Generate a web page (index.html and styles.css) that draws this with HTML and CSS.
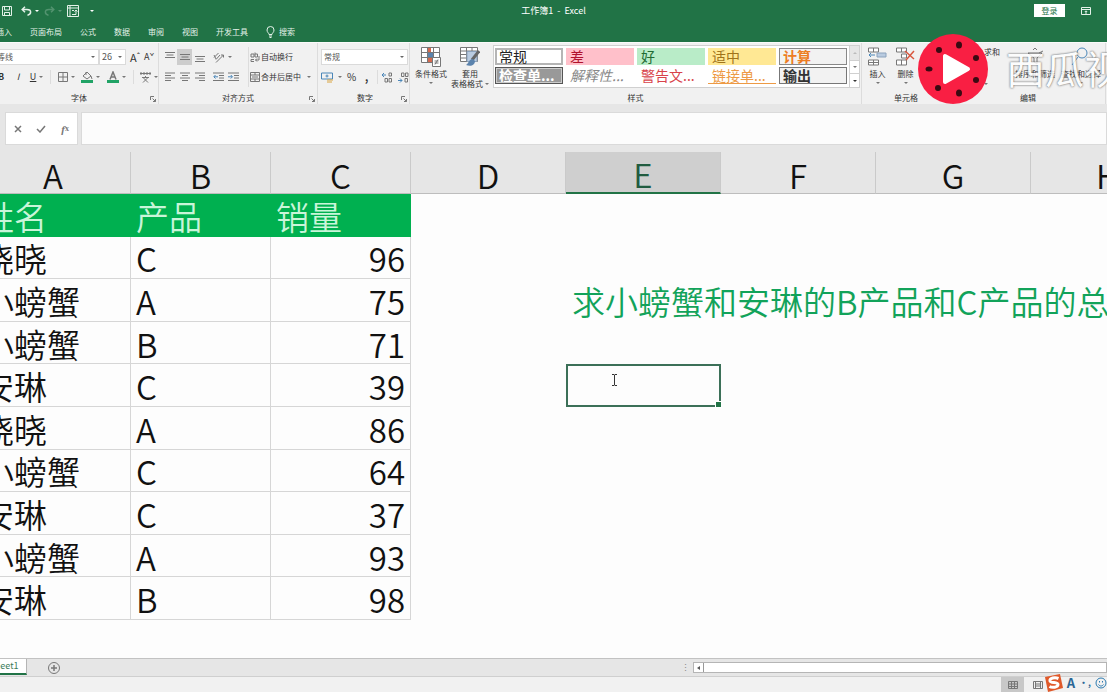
FILE: index.html
```html
<!DOCTYPE html>
<html lang="zh-CN">
<head>
  <meta charset="UTF-8">
  <meta name="viewport" content="width=device-width, initial-scale=1.0">
  <title>工作簿1 - Excel</title>
  <link rel="stylesheet" href="styles.css">
</head>
<body>
  <div class="app">
    <!-- Title bar -->
    <header class="titlebar">
      <div class="quick-access">
        <button class="save" aria-label="保存"><svg width="10" height="10" viewBox="0 0 10 10"><path d="M.5 .5h9v9h-9zM2.500 .5v3.500h5V.5M2.500 9.500V6.500h5v3"/></svg></button>
        <button aria-label="撤消"><svg width="11" height="10" viewBox="0 0 11 10"><path class="thick" d="M4 .8 1.200 3.500 4 6.200M1.500 3.500H6c5 0 4.500 5 .5 5.800"/></svg><i class="caret"></i></button>
        <button class="redo" aria-label="恢复"><svg width="11" height="10" viewBox="0 0 11 10"><path class="thick" d="M7 .8 9.800 3.500 7 6.200M9.500 3.500H5C0 3.500 .5 8.500 4.500 9.300"/></svg><i class="caret"></i></button>
        <button aria-label="数据透视表"><svg width="12" height="12" viewBox="0 0 12 12"><path d="M.5 .5h11v11H.5zM.5 3h11M3 .5v11M5 9.500h4V5M5 5.500h2M7.500 6.500 9 5l1.500 1.500"/></svg></button>
        <button class="customize" aria-label="自定义"><i class="caret"></i></button>
      </div>
      <h1>工作簿1&nbsp; -&nbsp; Excel</h1>
      <div class="account">
        <button class="login">登录</button>
        <button aria-label="功能区显示选项"><svg width="10" height="8" viewBox="0 0 10 8"><path d="M.5 .5h9v7h-9zM.5 2.500h9M5 7V4M3.800 5 5 3.800 6.200 5"/></svg></button>
      </div>
    </header>

    <nav class="tabs">
      <a href="#">插入</a>
      <a href="#">页面布局</a>
      <a href="#">公式</a>
      <a href="#">数据</a>
      <a href="#">审阅</a>
      <a href="#">视图</a>
      <a href="#">开发工具</a>
      <a href="#" class="search"><svg width="9" height="12" viewBox="0 0 9 12"><path d="M3 8.500C3 7 1 6.500 1 4a3.500 3.500 0 0 1 7 0c0 2.500-2 3-2 4.500zM3 10h3M3.500 11.500h2"/></svg>搜索</a>
    </nav>

    <!-- Ribbon -->
    <div class="ribbon">
      <section class="group font-group">
        <div class="row">
          <select class="font-name" aria-label="字体"><option>等线</option></select>
          <select class="font-size" aria-label="字号"><option>26</option></select>
          <button class="tool grow" aria-label="增大字号">A<sup>ˆ</sup></button>
          <button class="tool shrink" aria-label="减小字号">A<sup>ˇ</sup></button>
        </div>
        <div class="row second">
          <button class="tool"><b>B</b></button>
          <button class="tool"><em>I</em></button>
          <button class="tool drop"><u>U</u><i class="caret"></i></button>
          <span class="divider"></span>
          <button class="tool drop" aria-label="边框"><svg width="10" height="10" viewBox="0 0 10 10"><path d="M.5 .5h9v9h-9zM5 .5v9M.5 5h9"/></svg><i class="caret"></i></button>
          <button class="tool drop" aria-label="填充颜色"><svg width="12" height="12" viewBox="0 0 12 12"><path d="M2 5 6 1l4 4-4 3zM5 1v3M10 5l1 3"/><path class="green-fill" d="M0 9h12v3H0z"/></svg><i class="caret"></i></button>
          <button class="tool drop" aria-label="字体颜色"><svg width="12" height="12" viewBox="0 0 12 12"><path class="thick" d="M3 8.500 6 1l3 7.500M4 6h4"/><path class="green-fill" d="M0 9h12v3H0z"/></svg><i class="caret"></i></button>
          <span class="divider"></span>
          <button class="tool drop" aria-label="拼音"><svg width="11" height="12" viewBox="0 0 11 12"><path d="M0 2.500h11M1 1v3M4 1v3M7 1v3M10 1v3M2 6.500h7M5.500 5v1.500M3.500 7 8 11.500M7.500 7 3 11.500"/></svg><i class="caret"></i></button>
        </div>
        <footer>字体<svg class="launcher" viewBox="0 0 6 6"><path d="M.5 4V.5H4M2.500 2.500l3 3M5.500 3v2.500H3"/></svg></footer>
      </section>

      <section class="group align-group">
        <div class="align-body">
          <div class="align-grid">
            <button class="tool" aria-label="顶端对齐"><svg width="10" height="10" viewBox="0 0 10 10"><path d="M0 .5h10M1.500 3h7M0 5.500h10"/></svg></button>
            <button class="tool active" aria-label="垂直居中"><svg width="10" height="10" viewBox="0 0 10 10"><path d="M0 2.500h10M1.500 5h7M0 7.500h10"/></svg></button>
            <button class="tool" aria-label="底端对齐"><svg width="10" height="10" viewBox="0 0 10 10"><path d="M0 4.500h10M1.500 7h7M0 9.500h10"/></svg></button>
            <button class="tool" aria-label="左对齐"><svg width="10" height="10" viewBox="0 0 10 10"><path d="M0 1h10M0 3.500h6M0 6h10M0 8.500h6"/></svg></button>
            <button class="tool" aria-label="居中"><svg width="10" height="10" viewBox="0 0 10 10"><path d="M0 1h10M2 3.500h6M0 6h10M2 8.500h6"/></svg></button>
            <button class="tool" aria-label="右对齐"><svg width="10" height="10" viewBox="0 0 10 10"><path d="M0 1h10M4 3.500h6M0 6h10M4 8.500h6"/></svg></button>
          </div>
          <div class="stack indent">
            <button class="tool drop" aria-label="方向"><svg width="11" height="11" viewBox="0 0 11 11"><path d="M1 5.500 5.500 1M3 7.500 7 3M3 10.500l7.500-7.500M8 3h2.500v2.500M1 3l2 4"/></svg><i class="caret"></i></button>
            <div class="pair">
              <button class="tool" aria-label="减少缩进"><svg width="11" height="10" viewBox="0 0 11 10"><path d="M0 1h11M6 3.500h5M6 6h5M0 8.500h11"/><path class="blue" d="M5 4.800H1M2.500 3 .8 4.800l1.700 1.700"/></svg></button>
              <button class="tool" aria-label="增加缩进"><svg width="11" height="10" viewBox="0 0 11 10"><path d="M0 1h11M6 3.500h5M6 6h5M0 8.500h11"/><path class="blue" d="M0 4.800h4M2.800 3l1.700 1.800-1.700 1.700"/></svg></button>
            </div>
          </div>
          <div class="stack wrap">
            <button class="tool labelled"><svg width="10" height="10" viewBox="0 0 10 10"><path d="M1 2h3v3H1zM5 .5V5h2.500V2H5M4 7.500H1v2h3M5.500 8H9V4M7 6.500 5.500 8 7 9.500"/></svg>自动换行</button>
            <button class="tool labelled"><svg width="10" height="10" viewBox="0 0 10 10"><path d="M.5 .5h9v9h-9zM.5 3h9M.5 7h9M5 .5V3M5 7v2.500M2 5h6"/></svg>合并后居中<i class="caret"></i></button>
          </div>
        </div>
        <footer>对齐方式<svg class="launcher" viewBox="0 0 6 6"><path d="M.5 4V.5H4M2.500 2.500l3 3M5.500 3v2.500H3"/></svg></footer>
      </section>

      <section class="group number-group">
        <div class="row"><select class="number-format" aria-label="数字格式"><option>常规</option></select></div>
        <div class="row second">
          <button class="tool drop" aria-label="会计数字格式"><svg width="13" height="11" viewBox="0 0 13 11"><path class="blue" d="M.5 1h11v6H.5zM4.500 4h3M6 2.500v3"/><path class="gold" d="M6 8h6M6 10h5"/></svg><i class="caret"></i></button>
          <button class="tool percent">%</button>
          <button class="tool comma">,</button>
          <span class="divider"></span>
          <button class="tool" aria-label="增加小数位数"><svg width="11" height="11" viewBox="0 0 11 11"><path class="blue" d="M0 3h4M2 1 0 3l2 2"/><path d="M7 1h2.500v3H7zM3 6.500h2.500v3.500H3zM7 6.500h2.500v3.500H7z"/></svg></button>
          <button class="tool" aria-label="减少小数位数"><svg width="11" height="11" viewBox="0 0 11 11"><path class="blue" d="M0 8.500h4M2 6.500l2 2-2 2"/><path d="M3.500 1H6v3.500H3.500zM7.500 1H10v3.500H7.500zM7 6.500h2.500v3.500H7z"/></svg></button>
        </div>
        <footer>数字<svg class="launcher" viewBox="0 0 6 6"><path d="M.5 4V.5H4M2.500 2.500l3 3M5.500 3v2.500H3"/></svg></footer>
      </section>

      <section class="group styles-group">
        <div class="styles-body">
          <button class="big"><svg width="20" height="20" viewBox="0 0 20 20"><path class="sheet" d="M.5 .5h18v15H.5zM.5 5.500h18M.5 10.500h18M6.500 .5v15M12.500 .5v15"/><path class="red-fill" d="M7 1h3v4H7zM7 11h4v4H7z"/><path class="blue-fill" d="M7 6h5v4H7z"/><path class="sheet" d="M11.500 10.500h8v9h-8zM13.500 14h4M13.500 16h4M17 12.500l-3 5"/></svg><span>条件格式</span><i class="caret"></i></button>
          <button class="big"><svg width="20" height="20" viewBox="0 0 20 20"><path class="sheet" d="M.5 .5h17v14H.5zM.5 4h17M.5 7.500h17M.5 11h17M6.500 .5v14M12 .5v14"/><path class="blue-pale" d="M7 4.500h10v10H7z"/><path class="brush" d="M19 4l-7 9"/><path class="blue-fill" d="M13 12c-4 0-4 4-7 6 5 2 9 0 9-4z"/></svg><span>套用</span><span class="last-line">表格格式<i class="caret"></i></span></button>
          <div class="gallery">
            <div class="swatches">
              <button class="swatch normal">常规</button>
              <button class="swatch bad">差</button>
              <button class="swatch good">好</button>
              <button class="swatch neutral">适中</button>
              <button class="swatch calc">计算</button>
              <button class="swatch check">检查单...</button>
              <button class="swatch explain">解释性...</button>
              <button class="swatch warn">警告文...</button>
              <button class="swatch link">链接单...</button>
              <button class="swatch output">输出</button>
            </div>
            <div class="scroller">
              <button class="off" aria-label="上一行"><i class="caret up"></i></button>
              <button aria-label="下一行"><i class="caret"></i></button>
              <button aria-label="其他"><i class="caret more"></i></button>
            </div>
          </div>
        </div>
        <footer>样式</footer>
      </section>

      <section class="group cells-group">
        <div class="big-row">
          <button class="big"><svg width="19" height="20" viewBox="0 0 19 20"><path class="sheet" d="M.5 1h10v4H.5zM5.500 1v4M.5 13h10v5H.5zM5.500 13v5M.5 15.500h10"/><path class="blue-pale" d="M9 6h9v4H9z"/><path class="blue" d="M1 8h6M3 6 1 8l2 2"/></svg><span>插入</span><i class="caret"></i></button>
          <button class="big"><svg width="19" height="20" viewBox="0 0 19 20"><path class="sheet" d="M.5 1h10v4H.5zM5.500 1v4M5.500 7h5v4h-5zM.5 13h10v5H.5zM5.500 13v5"/><path class="red" d="M9 4l9 8M18 4l-8 9"/></svg><span>删除</span><i class="caret"></i></button>
        </div>
        <footer>单元格</footer>
      </section>

      <section class="group edit-group">
        <div class="edit-body">
          <div class="sums">
            <button>求和</button>
            <button aria-label="填充"><i class="caret"></i></button>
            <button aria-label="清除"><i class="caret"></i></button>
          </div>
          <button class="big"><svg width="20" height="20" viewBox="0 0 20 20"><path d="M8 3l2-2 2 2M3 6h14l-5 5v6l-3-2v-4zM14 6l4-2"/></svg><span>排序和筛选</span><i class="caret"></i></button>
          <button class="big"><svg width="20" height="20" viewBox="0 0 20 20"><path class="blue" d="M6 6a5 5 0 1 0 10 0a5 5 0 1 0-10 0M7 10l-6 8"/></svg><span>查找和选择</span><i class="caret"></i></button>
        </div>
        <footer>编辑</footer>
      </section>
    </div>

    <!-- Formula bar -->
    <div class="formula-bar">
      <div class="formula-buttons">
        <button aria-label="取消"><svg width="8" height="8" viewBox="0 0 8 8"><path class="thick" d="M1 1l6 6M7 1 1 7"/></svg></button>
        <button aria-label="输入"><svg width="10" height="8" viewBox="0 0 10 8"><path class="thick" d="M1 4l3 3 5-6"/></svg></button>
        <button class="fx"><em>f</em><small>x</small></button>
      </div>
      <input type="text" aria-label="编辑栏">
    </div>

    <!-- Worksheet -->
    <main class="sheet-area">
      <table class="grid">
        <colgroup>
          <col class="first"><col><col><col class="wide"><col class="wide"><col class="wide"><col class="wide"><col class="wide">
        </colgroup>
        <thead>
          <tr><th>A</th><th>B</th><th>C</th><th>D</th><th class="current">E</th><th>F</th><th>G</th><th>H</th></tr>
        </thead>
        <tbody>
          <tr class="heading"><td>姓名</td><td>产品</td><td>销量</td><td colspan="5"></td></tr>
          <tr><td>晓晓</td><td>C</td><td>96</td><td colspan="5"></td></tr>
          <tr><td>小螃蟹</td><td>A</td><td>75</td><td></td><td class="question" colspan="4">求小螃蟹和安琳的B产品和C产品的总销量</td></tr>
          <tr><td>小螃蟹</td><td>B</td><td>71</td><td colspan="5"></td></tr>
          <tr><td>安琳</td><td>C</td><td>39</td><td></td><td class="selected"><svg width="7" height="12" viewBox="0 0 7 12"><path d="M1 .5h2l.5 .5L4 .5h2M3.500 1v10M1 11.500h2l.5-.5 .5 .5h2"/></svg></td><td colspan="3"></td></tr>
          <tr><td>晓晓</td><td>A</td><td>86</td><td colspan="5"></td></tr>
          <tr><td>小螃蟹</td><td>C</td><td>64</td><td colspan="5"></td></tr>
          <tr><td>安琳</td><td>C</td><td>37</td><td colspan="5"></td></tr>
          <tr><td>小螃蟹</td><td>A</td><td>93</td><td colspan="5"></td></tr>
          <tr><td>安琳</td><td>B</td><td>98</td><td colspan="5"></td></tr>
        </tbody>
      </table>
    </main>

    <div class="sheet-tabs">
      <a href="#" class="sheet-tab">Sheet1</a>
      <button class="add-sheet" aria-label="新工作表"><svg width="12" height="12" viewBox="0 0 12 12"><path d="M.5 6a5.500 5.500 0 1 0 11 0a5.500 5.500 0 1 0-11 0"/><path class="thick" d="M6 3v6M3 6h6"/></svg></button>
      <div class="scroll-side">
        <span class="grip">⋮</span>
        <div class="hscroll"><button aria-label="向左滚动"><i class="caret left"></i></button></div>
      </div>
    </div>

    <footer class="statusbar">
      <button class="view on" aria-label="普通"><svg width="10" height="8" viewBox="0 0 10 8"><path d="M.5 .5h9v7h-9zM.5 3h9M.5 5.500h9M3.500 .5v7M6.500 .5v7"/></svg></button>
      <button class="view" aria-label="页面布局"><svg width="10" height="8" viewBox="0 0 10 8"><path d="M.5 .5h9v7h-9zM2.500 .5v7M7.500 .5v7M3 3h4M3 5h4"/></svg></button>
    </footer>

    <!-- Input method toolbar floating over the status bar -->
    <div class="ime">
      <svg width="19" height="18" viewBox="0 0 19 18"><path class="ime-box" d="M1 3 16 0l3 14-15 4z"/><path class="ime-s" d="M14.500 4.500C11 3 5.500 4 6 7c.5 2.500 8 .5 8 3.500 0 3-6 3.500-8.500 2"/></svg>
      <span class="ime-a">A</span>
      <span class="ime-dot">•,</span>
      <svg width="12" height="12" viewBox="0 0 12 12"><path class="ime-face" d="M1 6a5 5 0 1 0 10 0a5 5 0 1 0-10 0M4.500 4v1.500M7.500 4v1.500M3.500 7.500c1.500 2 3.500 2 5 0"/></svg>
    </div>

    <!-- Video watermark -->
    <div class="watermark">
      <svg width="70" height="70" viewBox="0 0 70 70">
        <circle class="melon" cx="35" cy="35" r="35"/>
        <g class="seeds">
          <ellipse cx="41" cy="11" rx="3" ry="3.500"/>
          <ellipse cx="21" cy="16" rx="3" ry="3"/>
          <ellipse cx="58" cy="24" rx="3" ry="3"/>
          <ellipse cx="11" cy="35" rx="3.500" ry="2.500"/>
          <ellipse cx="58" cy="46" rx="3" ry="3"/>
          <ellipse cx="20" cy="54" rx="3" ry="3"/>
          <ellipse cx="41" cy="59" rx="3" ry="3.500"/>
        </g>
        <path class="play" d="M27 22v26l23-13z"/>
      </svg>
      <span>西瓜视频</span>
    </div>
  </div>
</body>
</html>
```
FILE: styles.css
```css
* {
  box-sizing: border-box;
}

body {
  margin: 0;
  overflow: hidden;
  font-family: "Noto Sans CJK SC", "Noto Sans", sans-serif;
  font-size: 8px;
  line-height: 10px;
  color: #333;
}

button,
select,
input {
  font: inherit;
  color: inherit;
  padding: 0;
  margin: 0;
  border: none;
  background: none;
  border-radius: 0;
}

button {
  display: flex;
  align-items: center;
  justify-content: center;
  white-space: nowrap;
}

a {
  color: inherit;
  text-decoration: none;
}

svg {
  display: block;
  flex: none;
  fill: none;
  stroke: #777;
}

.app {
  position: relative;
  display: flex;
  flex-direction: column;
  height: 100vh;
  overflow: hidden;
  background: #e6e6e6;
}

.caret {
  border: 2px solid transparent;
  border-top-color: #777;
  border-bottom: none;
}

.caret.left {
  border: 2px solid transparent;
  border-right: 3px solid #555;
  border-left: none;
}

.caret.up {
  border: 2px solid transparent;
  border-bottom-color: #bbb;
  border-top: none;
}

.thick {
  stroke-width: 1.5;
}

.blue {
  stroke: #4a86b8;
}

.gold {
  stroke: #d9a441;
}

.red {
  stroke: #d9573f;
  stroke-width: 1.5;
}

.green-fill {
  fill: #21a366;
  stroke: none;
}

.red-fill {
  fill: #d4694e;
  stroke: none;
}

.blue-fill {
  fill: #5b83ad;
  stroke: none;
}

.blue-pale {
  fill: #b9cbe0;
  stroke: #8ca3bd;
}

.sheet {
  fill: #fff;
}

.brush {
  stroke: #666;
  stroke-width: 3;
}

/* Title bar */
.titlebar {
  display: grid;
  grid-template-columns: 1fr auto 1fr;
  align-items: center;
  flex: none;
  height: 21px;
  background: #217346;
  color: #fff;
}

.titlebar svg,
.tabs svg {
  stroke: #e4f2e9;
}

.titlebar .caret {
  border-top-color: #fff;
}

.titlebar h1 {
  margin: 0;
  font-size: 9px;
  line-height: 18px;
  font-weight: 400;
}

.quick-access {
  display: flex;
  align-items: center;
  gap: 5px;
  padding-left: 2px;
}

.quick-access button {
  gap: 3px;
}

.quick-access .save {
  margin-right: 4px;
}

.quick-access .redo {
  opacity: 0.25;
}

.quick-access .customize {
  margin-left: 6px;
}

.account {
  display: flex;
  align-items: center;
  justify-content: flex-end;
  gap: 16px;
  padding-right: 16px;
}

.login {
  width: 31px;
  height: 13px;
  background: #fff;
  color: #217346;
}

/* Ribbon tabs */
.tabs {
  display: flex;
  align-items: center;
  gap: 18px;
  flex: none;
  height: 21px;
  background: #217346;
  color: #e4f2e9;
}

.tabs a {
  flex: none;
}

.tabs a:first-child {
  margin-left: -4px;
}

.tabs .search {
  display: flex;
  align-items: center;
  gap: 4px;
}

/* Ribbon */
.ribbon {
  display: flex;
  flex: none;
  height: 62px;
  background: #f1f1f1;
  border-top: 1px solid #fafafa;
}

.group {
  display: flex;
  flex-direction: column;
  flex: none;
  padding-top: 4px;
  border-right: 1px solid #dcdcdc;
}

.group footer {
  position: relative;
  margin-top: auto;
  padding-bottom: 1px;
  text-align: center;
}

.launcher {
  position: absolute;
  right: 2px;
  bottom: 2px;
  width: 6px;
  height: 6px;
}

.row {
  display: flex;
  align-items: center;
  height: 20px;
}

.tool {
  min-width: 10px;
  height: 16px;
}

.drop {
  gap: 4px;
}

.divider {
  width: 1px;
  height: 14px;
  background: #dcdcdc;
}

select {
  appearance: none;
  height: 16px;
  padding-left: 2px;
  border: 1px solid #dadada;
  background: #fff url("data:image/svg+xml,%3Csvg xmlns='http://www.w3.org/2000/svg' width='4' height='2'%3E%3Cpath d='M0 0h4L2 2z' fill='%23666'/%3E%3C/svg%3E") no-repeat right 3px center;
  color: #555;
}

.font-group {
  width: 159px;
}

.font-name {
  width: 105px;
  margin-left: -6px;
}

.font-size {
  width: 27px;
  font-size: 9px;
}

.grow,
.shrink {
  margin-left: 4px;
  font-size: 11px;
}

.shrink {
  font-size: 9px;
}

.tool sup {
  font-size: 8px;
  line-height: 8px;
}

.font-group .second {
  gap: 7px;
  margin-left: -4px;
}

.font-group .second .tool {
  gap: 3px;
}

.font-group .second .tool:nth-child(-n+3) {
  font-size: 9px;
}

.align-group {
  width: 159px;
}

.align-body {
  display: flex;
  padding-left: 3px;
}

.align-grid {
  display: grid;
  grid-template-columns: repeat(3, 15px);
  grid-auto-rows: 20px;
  align-items: center;
}

.tool.active {
  background: #cdcdcd;
}

.stack {
  display: flex;
  flex-direction: column;
  align-items: flex-start;
  gap: 4px;
  padding-top: 2px;
}

.indent {
  width: 36px;
  margin-left: 6px;
  border-right: 1px solid #dcdcdc;
}

.pair {
  display: flex;
  gap: 4px;
}

.wrap {
  padding-left: 1px;
}

.labelled {
  gap: 1px;
}

.labelled .caret {
  margin-left: 5px;
}

.number-group {
  width: 92px;
  padding-left: 3px;
}

.number-format {
  width: 87px;
}

.number-group .second {
  gap: 5px;
}

.percent,
.comma {
  font-size: 10px;
}

.comma {
  font-weight: 700;
}

.big {
  display: flex;
  flex-direction: column;
  justify-content: flex-start;
}

.big svg {
  margin-bottom: 2px;
}

.big > .caret {
  margin-top: 3px;
}

.last-line {
  display: flex;
  align-items: center;
  gap: 2px;
}

.styles-group {
  width: 452px;
}

.styles-body {
  display: flex;
  gap: 4px;
  padding-left: 5px;
}

.gallery {
  display: flex;
  height: 43px;
  margin-top: -2px;
  border: 1px solid #d0d0d0;
  background: #fff;
}

.swatches {
  display: grid;
  grid-template-columns: repeat(5, 68px);
  grid-auto-rows: 17px;
  gap: 2px 3px;
  padding: 2px 0 2px 1px;
}

.swatch {
  justify-content: flex-start;
  padding-left: 4px;
  font-size: 14px;
  line-height: 15px;
}

.normal {
  border: 2px solid #b5b5b5;
  padding-left: 2px;
  color: #222;
}

.bad {
  background: #ffc0ca;
  color: #b0122c;
}

.good {
  background: #b9ecc8;
  color: #226b32;
}

.neutral {
  background: #ffe894;
  color: #a0731b;
}

.calc {
  border: 1px solid #888;
  padding-left: 3px;
  background: #f2f2f2;
  color: #ed7d24;
  font-weight: 700;
}

.check {
  border: 2px solid #555;
  outline: 1px solid #ccc;
  outline-offset: -2px;
  padding-left: 2px;
  background: #999;
  color: #fff;
  font-weight: 700;
}

.explain {
  color: #888;
  font-style: italic;
}

.warn {
  color: #d8434b;
}

.link {
  border-bottom: 1px solid #ed9a45;
  color: #ed9a45;
}

.output {
  border: 1px solid #777;
  padding-left: 3px;
  background: #f2f2f2;
  color: #333;
  font-weight: 700;
}

.scroller {
  display: grid;
  grid-template-rows: repeat(3, 1fr);
  width: 10px;
  margin-left: 2px;
  border-left: 1px solid #d0d0d0;
}

.scroller button + button {
  border-top: 1px solid #d0d0d0;
}

.scroller .off {
  background: #e6e6e6;
}

.scroller .more {
  border-top-color: #333;
}

.cells-group {
  width: 89px;
}

.big-row {
  display: flex;
  gap: 9px;
  padding-left: 6px;
}

.edit-group {
  width: 155px;
}

.edit-body {
  display: flex;
  gap: 6px;
  padding-left: 33px;
}

.sums {
  display: flex;
  flex-direction: column;
  align-items: flex-start;
  gap: 12px;
  margin-right: 9px;
}

/* Formula bar */
.formula-bar {
  display: flex;
  gap: 3px;
  flex: none;
  height: 48px;
  padding: 8px 0 7px 5px;
}

.formula-buttons {
  display: grid;
  grid-template-columns: repeat(3, 1fr);
  width: 73px;
  border: 1px solid #dadada;
  background: #fff;
}

.formula-buttons .fx {
  font-family: "Liberation Serif", serif;
  font-size: 11px;
  font-weight: 700;
  color: #777;
}

.fx small {
  font-size: 8px;
}

.formula-bar input {
  flex: 1;
  border: 1px solid #dadada;
  background: #fcfcfc;
}

/* Worksheet */
.sheet-area {
  flex: 1;
  min-height: 0;
  overflow: hidden;
  background: #fdfdfd;
}

.grid {
  width: 1210px;
  height: 468px;
  margin-left: -24px;
  table-layout: fixed;
  border-collapse: separate;
  border-spacing: 0;
  font-size: 33px;
  font-weight: 350;
  line-height: 34px;
  color: #111;
}

.grid col {
  width: 140px;
}

.grid .first {
  width: 155px;
}

.grid .wide {
  width: 155px;
}

.grid th {
  height: 42px;
  padding: 4px 0 0;
  border-right: 1px solid #cacaca;
  border-bottom: 1px solid #bdbdbd;
  background: #e6e6e6;
  font-weight: 350;
}

.grid .current {
  border-bottom: 2px solid #217346;
  background: #cfcfcf;
  color: #215c40;
}

.grid td {
  padding: 2px 5px 0;
  white-space: nowrap;
}

.grid td:nth-child(-n+3) {
  border-right: 1px solid #d6d6d6;
  border-bottom: 1px solid #d6d6d6;
}

.grid td:nth-child(3) {
  text-align: right;
}

.grid .heading td:nth-child(-n+3) {
  border-color: #00b050;
  background: #00b050;
  color: #c9f5d9;
  text-align: left;
}

.grid .question {
  padding-left: 6px;
  color: #12a35a;
}

.grid .selected {
  position: relative;
  padding: 0 0 0 43px;
  border: 2px solid #3c7058;
}

.selected::after {
  content: "";
  position: absolute;
  right: -3px;
  bottom: -3px;
  width: 5px;
  height: 5px;
  border: 1px solid #fff;
  background: #217346;
}

.selected svg {
  margin-bottom: 12px;
  stroke: #333;
}

/* Sheet tabs */
.sheet-tabs {
  display: flex;
  align-items: center;
  flex: none;
  height: 19px;
  border-top: 1px solid #c2c2c2;
  border-bottom: 1px solid #cfcfcf;
}

.sheet-tab {
  align-self: flex-start;
  width: 45px;
  height: 16px;
  margin-left: -18px;
  border-right: 1px solid #b5b5b5;
  border-bottom: 2px solid #217346;
  background: #fff;
  color: #3a7a58;
  font-size: 9px;
  line-height: 14px;
  text-align: center;
}

.add-sheet {
  margin-left: 21px;
}

.scroll-side {
  display: flex;
  align-items: center;
  gap: 8px;
  width: 426px;
  margin-left: auto;
}

.grip {
  width: 4px;
  font-size: 9px;
  color: #888;
}

.hscroll {
  flex: 1;
  height: 11px;
  border: 1px solid #b5b5b5;
  background: #fff;
}

.hscroll button {
  width: 10px;
  height: 9px;
  border-right: 1px solid #999;
}

.statusbar {
  display: flex;
  justify-content: flex-end;
  gap: 2px;
  flex: none;
  height: 15px;
  padding-right: 58px;
  background: #f1f1f1;
}

.view {
  width: 23px;
}

.view.on {
  background: #c8c8c8;
}

.ime {
  position: absolute;
  right: 0;
  bottom: 0;
  display: flex;
  align-items: center;
  gap: 4px;
  color: #2b6695;
}

.ime-box {
  fill: #e0592a;
  stroke: none;
}

.ime-s {
  stroke: #fff;
  stroke-width: 3;
}

.ime-a {
  font-size: 13px;
  font-weight: 700;
}

.ime-dot {
  font-size: 9px;
  font-weight: 700;
}

.ime-face {
  stroke: #2b7ab0;
}

/* Watermark */
.watermark {
  position: absolute;
  top: 34px;
  left: 918px;
  display: flex;
  align-items: center;
  gap: 18px;
  color: #fff;
  font-size: 39px;
  font-weight: 400;
  line-height: 46px;
  white-space: nowrap;
  text-shadow: 0 0 2px #555, 0 0 2px #999;
}

.watermark span {
  padding-bottom: 4px;
  opacity: 0.85;
}

.melon {
  fill: #f91f43;
  stroke: none;
}

.seeds {
  fill: #3a0a12;
  stroke: none;
}

.play {
  fill: #fff;
  stroke: #fff;
  stroke-width: 4;
  stroke-linejoin: round;
}
```
